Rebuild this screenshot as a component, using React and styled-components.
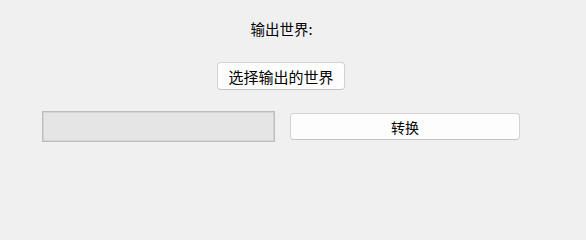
import styled, { createGlobalStyle } from "styled-components";

const GlobalStyle = createGlobalStyle`
  html, body {
    margin: 0;
    padding: 0;
    background: #f0f0f0;
  }
  body {
    font-family: "Noto Sans CJK SC", "Noto Sans", sans-serif;
    color: #000;
  }
`;

export default function App() {
  return (
    <>
      <GlobalStyle />
      <Window>
        <Top>
          <Label>输出世界:</Label>
          <PickButton>选择输出的世界</PickButton>
        </Top>
        <Row>
          <PathField readOnly value="" />
          <WideButton>转换</WideButton>
        </Row>
      </Window>
    </>
  );
}

const Window = styled.div`
  width: 586px;
  height: 203px;
  box-sizing: border-box;
  padding: 19px 0 0 42px;
`;

const Top = styled.div`
  width: 478px;
  display: flex;
  flex-direction: column;
  align-items: center;
  gap: 23px;
`;

const Label = styled.div`
  font-size: 14.5px;
  line-height: 20px;
  padding-left: 1px;
`;

const Button = styled.button`
  font-family: "Noto Sans CJK SC", "Noto Sans", sans-serif;
  font-size: ${({ $size }) => $size || "14px"};
  color: #000;
  background: #fdfdfd;
  border: 1px solid #d2d2d2;
  border-bottom-color: #c4c4c4;
  border-radius: 4px;
  padding: 0;
  box-sizing: border-box;
`;

const PickButton = styled(Button).attrs({ $size: "15px" })`
  width: 128px;
  height: 28px;
`;

const Row = styled.div`
  width: 478px;
  margin-top: 21px;
  display: flex;
  align-items: center;
  gap: 15px;
`;

const PathField = styled.input`
  width: 233px;
  height: 31px;
  box-sizing: border-box;
  background: #e5e5e5;
  border: 1px solid #bcbcbc;
  box-shadow: inset 0 0 0 1px #d4d4d4;
  outline: none;
`;

const WideButton = styled(Button)`
  width: 230px;
  height: 27px;
`;
